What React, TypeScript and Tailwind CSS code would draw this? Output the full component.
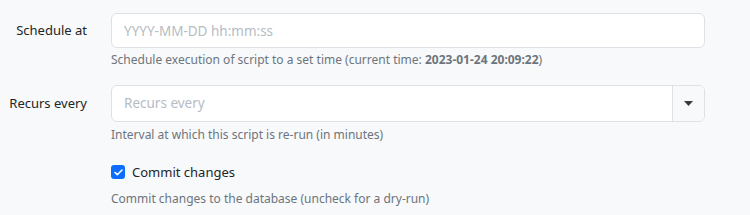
import React from 'react';

const App: React.FC = () => {
    return (
        <div
            className="w-[750px] h-[215px] bg-[#f8f9fa] text-[#212529] pt-[13px]"
            style={{ fontFamily: '"Noto Sans", "Open Sans", sans-serif' }}
        >
            {/* Schedule at */}
            <div className="flex">
                <label className="w-[88px] shrink-0 text-right text-[13px] leading-[35px] pr-px">Schedule at</label>
                <div className="ml-[23px] w-[594px]">
                    <input
                        type="text"
                        placeholder="YYYY-MM-DD hh:mm:ss"
                        className="block w-full h-[35px] px-3 text-[13.5px] bg-white border border-[#dee2e6] rounded-[6px] outline-none placeholder:text-[#b6bcc3]"
                    />
                    <div className="mt-[3px] text-[12px] leading-[18px] text-[#6c757d]">
                        Schedule execution of script to a set time (current time: <b>2023-01-24 20:09:22</b>)
                    </div>
                </div>
            </div>

            {/* Recurs every */}
            <div className="flex mt-[16px]">
                <label className="w-[88px] shrink-0 text-right text-[13px] leading-[37px] pr-px">Recurs every</label>
                <div className="ml-[23px] w-[594px]">
                    <div className="flex h-[37px] bg-white border border-[#dee2e6] rounded-[6px] overflow-hidden">
                        <input
                            type="text"
                            placeholder="Recurs every"
                            className="flex-1 min-w-0 px-3 text-[13.5px] outline-none placeholder:text-[#b6bcc3]"
                        />
                        <button className="w-[32px] border-l border-[#dee2e6] bg-[#f8f9fa] flex items-center justify-center">
                            <svg width="9" height="5" viewBox="0 0 9 5">
                                <path d="M0 0h9L4.5 5z" fill="#343a40" />
                            </svg>
                        </button>
                    </div>
                    <div className="mt-[4px] text-[12px] leading-[18px] text-[#6c757d]">
                        Interval at which this script is re-run (in minutes)
                    </div>
                    <label className="mt-[18px] flex items-center gap-[7px] text-[13px] leading-[20px]">
                        <span className="w-[14px] h-[14px] rounded-[3px] bg-[#0d6efd] flex items-center justify-center">
                            <svg width="9" height="7" viewBox="0 0 9 7">
                                <path d="M1 3.5l2.3 2.2L8 1" fill="none" stroke="#fff" strokeWidth="1.6" strokeLinecap="round" strokeLinejoin="round" />
                            </svg>
                        </span>
                        Commit changes
                    </label>
                    <div className="mt-[8px] text-[12px] leading-[18px] text-[#6c757d]">
                        Commit changes to the database (uncheck for a dry-run)
                    </div>
                </div>
            </div>
        </div>
    );
};

export default App;
